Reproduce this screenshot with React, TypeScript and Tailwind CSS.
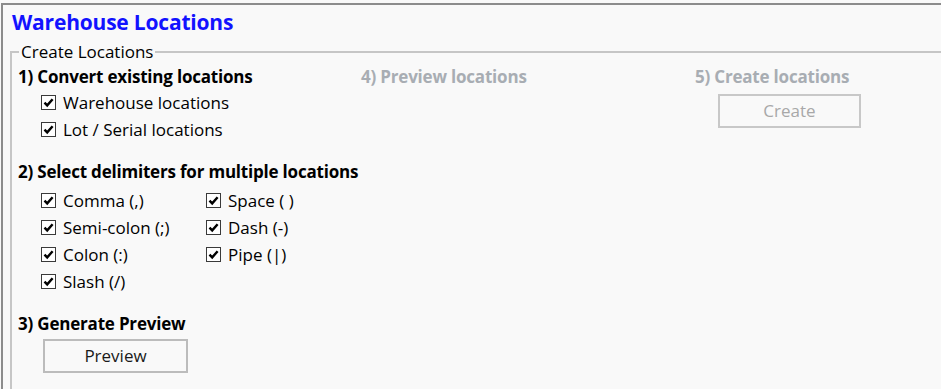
import React from "react";

function Check({ label }: { label: string }) {
  return (
    <div className="flex items-center h-[27px]">
      <div className="w-[15px] h-[15px] border border-[#3a3a3a] bg-white flex items-center justify-center">
        <svg width="11" height="11" viewBox="0 0 11 11">
          <path d="M1.5 5.6 L4.2 8.4 L9.6 2.2" fill="none" stroke="#000" strokeWidth="2.4" />
        </svg>
      </div>
      <span className="ml-[7px] text-[17px] text-black leading-none">{label}</span>
    </div>
  );
}

function Btn({ label, disabled }: { label: string; disabled?: boolean }) {
  return (
    <div
      className={
        "h-[34px] border-2 flex items-center justify-center text-[17px] " +
        (disabled ? "border-[#c8c8c8] text-[#a8a8a8]" : "border-[#bcbcbc] text-[#1a1a1a]")
      }
    >
      {label}
    </div>
  );
}

export default function App() {
  return (
    <div
      className="w-[941px] h-[389px] bg-[#f9f9f9] overflow-hidden pt-[3px] pl-[1px]"
      style={{ fontFamily: '"Open Sans", "Noto Sans", sans-serif' }}
    >
      <div className="h-full border-l-2 border-t-2 border-[#8c8c8c] pl-[7px]">
        <div className="h-[38px] pl-[2px] pt-[3px] text-[21px] leading-[28px] font-bold text-[#1212ff] tracking-[-0.2px]">
          Warehouse Locations
        </div>
        <fieldset className="border-l-2 border-t-2 border-[#c6c6c6] pl-[6px] h-[400px]">
          <legend className="ml-[1px] px-[2px] text-[17px] leading-[18px] text-black">Create Locations</legend>
          <div className="grid grid-cols-[343px_334px_1fr] mt-[4px]">
            <div>
              <div className="h-[24px] flex items-center text-[17px] font-bold text-black tracking-[-0.2px]">
                1) Convert existing locations
              </div>
              <div className="pl-[23px]">
                <Check label="Warehouse locations" />
                <Check label="Lot / Serial locations" />
              </div>
              <div className="h-[24px] mt-[17px] flex items-center text-[17px] font-bold text-black tracking-[-0.2px]">
                2) Select delimiters for multiple locations
              </div>
              <div className="pl-[23px] pt-[3px] grid grid-cols-[165px_165px]">
                <Check label="Comma (,)" />
                <Check label="Space ( )" />
                <Check label="Semi-colon (;)" />
                <Check label="Dash (-)" />
                <Check label="Colon (:)" />
                <Check label="Pipe (|)" />
                <Check label="Slash (/)" />
              </div>
              <div className="h-[24px] mt-[17px] flex items-center text-[17px] font-bold text-black tracking-[-0.2px]">
                3) Generate Preview
              </div>
              <div className="pl-[25px] pt-[3px] w-[170px]">
                <Btn label="Preview" />
              </div>
            </div>
            <div>
              <div className="h-[24px] flex items-center text-[17px] font-bold text-[#a8adb3] tracking-[-0.2px]">
                4) Preview locations
              </div>
            </div>
            <div>
              <div className="h-[24px] flex items-center text-[17px] font-bold text-[#a8adb3] tracking-[-0.2px]">
                5) Create locations
              </div>
              <div className="pl-[23px] pt-[5px] w-[166px]">
                <Btn label="Create" disabled />
              </div>
            </div>
          </div>
        </fieldset>
      </div>
    </div>
  );
}
